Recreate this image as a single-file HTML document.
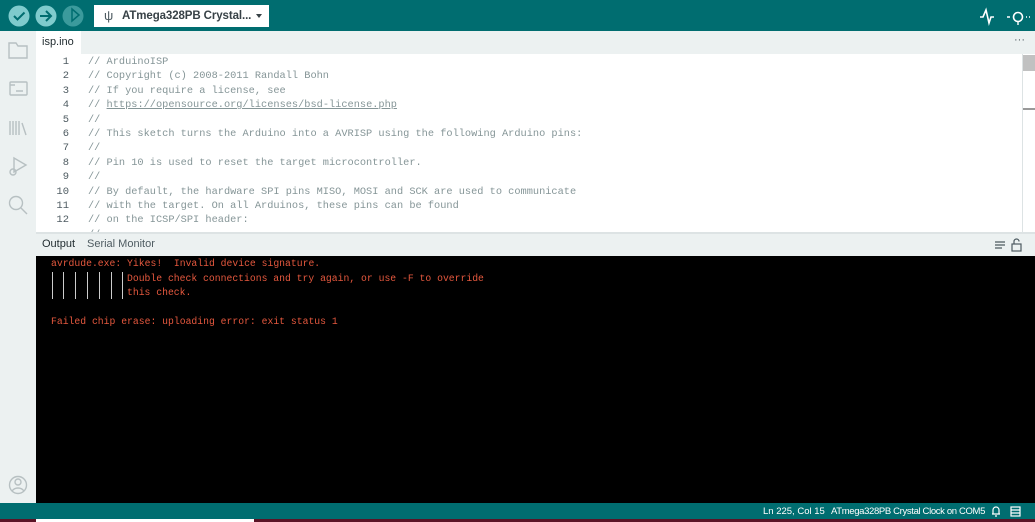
<!DOCTYPE html><html><head><style>
*{margin:0;padding:0;box-sizing:border-box}
body{width:1035px;height:522px;overflow:hidden;position:relative;background:#fff;font-family:"Liberation Sans",sans-serif}
.a{position:absolute}
.mono{font-family:"Liberation Mono",monospace}
.code{font-size:10.3px}
.code div{height:14.4px;line-height:14.4px;white-space:pre;color:#859597}
.ln{font-size:10.5px}
.ln div{height:14.4px;line-height:14.4px;text-align:right;color:#4e5b61}
.con{font-size:9.75px}
.con div{height:14.6px;line-height:14.6px;white-space:pre;color:#e5583e}
.bar{position:absolute;top:272px;width:1px;height:27px;background:#ccc}
</style></head><body>
<div class="a" style="left:0;top:0;width:1035px;height:31px;background:#006d70"></div>
<svg class="a" style="left:0;top:0" width="90" height="31">
<circle cx="19" cy="16" r="10.5" fill="#7fcbcd"/><path d="M14 16l3.5 3.5 7-7" stroke="#006d70" stroke-width="2" fill="none"/>
<circle cx="46" cy="16" r="10.5" fill="#7fcbcd"/><path d="M40 16h11M46 11l5 5-5 5" stroke="#006d70" stroke-width="2" fill="none"/>
<circle cx="73" cy="16" r="10.5" fill="#3b9a9c"/><path d="M72 9l7 6-7 6z" stroke="#006d70" stroke-width="1.5" fill="none"/>
</svg>
<div class="a" style="left:94px;top:5px;width:175px;height:22px;background:#fff"></div>
<div class="a" style="left:104px;top:5px;font-size:13px;line-height:22px;color:#4e5b61">&#968;</div>
<div class="a" style="left:122px;top:5px;font-size:11.5px;font-weight:bold;line-height:22px;color:#374146;letter-spacing:-0.1px">ATmega328PB Crystal...</div>
<div class="a" style="left:256px;top:14px;border-left:3.5px solid transparent;border-right:3.5px solid transparent;border-top:4px solid #374146"></div>
<svg class="a" style="left:975px;top:5px" width="60" height="22"><path d="M5 12h3l3-7 3 13 2-6h3" stroke="#fff" stroke-width="1.6" fill="none"/><circle cx="43" cy="12" r="4.5" stroke="#fff" stroke-width="1.6" fill="none"/><path d="M32 12h3M51 12h1M54 12h1M43 16v4" stroke="#fff" stroke-width="1.4"/></svg>
<div class="a" style="left:0;top:31px;width:36px;height:472px;background:#ecf1f1"></div>
<svg class="a" style="left:0;top:31px" width="36" height="472" fill="none" stroke="#b7c0c2" stroke-width="1.4">
<path d="M9 12h7l2 3h9v12H9z"/><rect x="10" y="51" width="17" height="13" rx="1"/><path d="M10 54h5M16 60h7"/>
<path d="M10 90V104M13 90v14M16 90v14M19 90v14M22 92l4 12"/>
<path d="M14 127l12 7-12 7z"/><circle cx="13" cy="141" r="3"/>
<circle cx="16" cy="172" r="6.5"/><path d="M21 177l6 6"/>
<circle cx="18" cy="454" r="8.5"/><circle cx="18" cy="451" r="3"/><path d="M12 460c3-4 9-4 12 0"/>
</svg>
<div class="a" style="left:36px;top:31px;width:999px;height:23px;background:#ecf1f1"></div>
<div class="a" style="left:36px;top:31px;width:45px;height:23px;background:#fff;font-size:11px;line-height:23px;padding-left:6px;color:#1f2a2e">isp.ino</div>
<div class="a" style="left:1014px;top:34px;font-size:11px;color:#4e5b61">&middot;&middot;&middot;</div>
<div class="a ln mono" style="left:40px;top:55px;width:29px">
<div>1</div><div>2</div><div>3</div><div>4</div><div>5</div><div>6</div><div>7</div><div>8</div><div>9</div><div>10</div><div>11</div><div>12</div></div>
<div class="a code mono" style="left:88px;top:55px;height:177px;overflow:hidden">
<div>// ArduinoISP</div><div>// Copyright (c) 2008-2011 Randall Bohn</div><div>// If you require a license, see</div><div>// <u>https://opensource.org/licenses/bsd-license.php</u></div><div>//</div><div>// This sketch turns the Arduino into a AVRISP using the following Arduino pins:</div><div>//</div><div>// Pin 10 is used to reset the target microcontroller.</div><div>//</div><div>// By default, the hardware SPI pins MISO, MOSI and SCK are used to communicate</div><div>// with the target. On all Arduinos, these pins can be found</div><div>// on the ICSP/SPI header:</div><div>//</div></div>
<div class="a" style="left:1022px;top:54px;width:1px;height:178px;background:#dde3e4"></div>
<div class="a" style="left:1023px;top:55px;width:12px;height:16px;background:#c1c1c1"></div>
<div class="a" style="left:1023px;top:108px;width:12px;height:2px;background:#999"></div>
<div class="a" style="left:36px;top:232px;width:999px;height:24px;background:#ecf1f1;border-top:2px solid #dde3e4"></div>
<div class="a" style="left:42px;top:238px;font-size:11px;color:#1f2a2e">Output</div>
<div class="a" style="left:87px;top:238px;font-size:11px;color:#4e5b61">Serial Monitor</div>
<svg class="a" style="left:992px;top:238px" width="40" height="14" fill="none" stroke="#4e5b61" stroke-width="1.2"><path d="M3 4h10M3 7h10M3 10h7"/><rect x="20" y="6" width="9" height="7"/><path d="M22 6V3.5a2.5 2.5 0 015 0"/></svg>
<div class="a" style="left:36px;top:256px;width:999px;height:247px;background:#000"></div>
<div class="a con mono" style="left:51px;top:257px">
<div>avrdude.exe: Yikes!  Invalid device signature.</div><div></div><div></div><div></div><div>Failed chip erase: uploading error: exit status 1</div></div>
<div class="a con mono" style="left:127px;top:271.6px"><div>Double check connections and try again, or use -F to override</div><div>this check.</div></div>
<div class="bar" style="left:52px"></div><div class="bar" style="left:63px"></div><div class="bar" style="left:75px"></div><div class="bar" style="left:87px"></div><div class="bar" style="left:99px"></div><div class="bar" style="left:111px"></div><div class="bar" style="left:122px"></div>
<div class="a" style="left:0;top:503px;width:1035px;height:16px;background:#006d70"></div>
<div class="a" style="left:763px;top:503px;font-size:9.5px;line-height:17px;color:#fff">Ln 225, Col 15</div>
<div class="a" style="left:831px;top:503px;font-size:9.5px;line-height:17px;color:#fff;letter-spacing:-0.35px">ATmega328PB Crystal Clock on COM5</div>
<svg class="a" style="left:988px;top:504px" width="40" height="14" fill="none" stroke="#fff" stroke-width="1.2"><path d="M5 10V6a3 3 0 016 0v4zM4 10h8M7 12h2"/><rect x="23" y="3" width="9" height="9"/><path d="M23 6h9M23 9h9"/></svg>
<div class="a" style="left:0;top:519px;width:1035px;height:3px;background:#5a1426"></div>
<div class="a" style="left:36px;top:519px;width:218px;height:3px;background:#fff"></div>
</body></html>
